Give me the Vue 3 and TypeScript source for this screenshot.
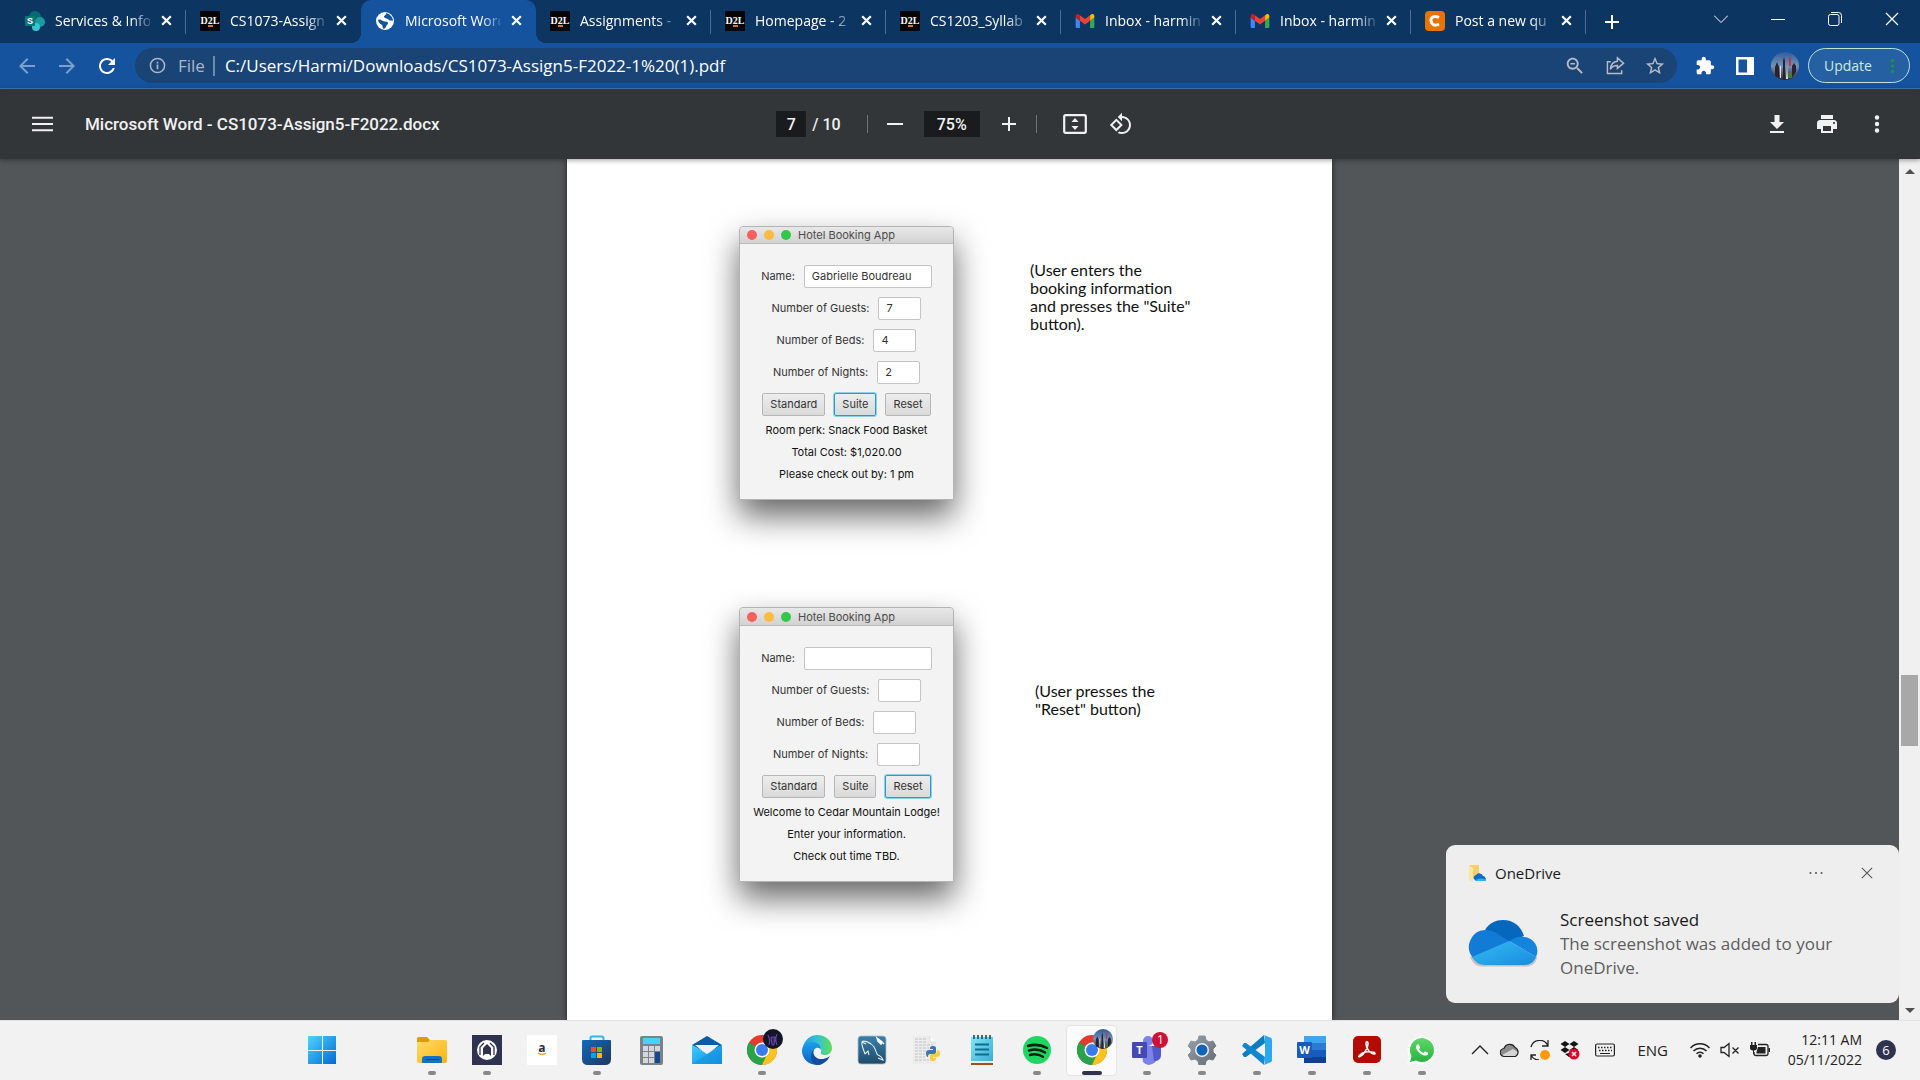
<script setup lang="ts">
import { ref } from 'vue'

interface Tab { title: string; icon: string; letter?: string; active?: boolean }
interface Booking {
  id: string
  note: string
  name: string
  guests: string
  beds: string
  nights: string
  focused: string
  lines: string[]
}
interface TaskApp { name: string; icon: string; letter?: string; badge?: string; running?: boolean; active?: boolean }

const tabs: Tab[] = [
  { title: 'Services & Info', icon: 'sharepoint', letter: 'S' },
  { title: 'CS1073-Assign', icon: 'd2l', letter: 'D2L' },
  { title: 'Microsoft Word', icon: 'globe', active: true },
  { title: 'Assignments -', icon: 'd2l', letter: 'D2L' },
  { title: 'Homepage - 2', icon: 'd2l', letter: 'D2L' },
  { title: 'CS1203_Syllab', icon: 'd2l', letter: 'D2L' },
  { title: 'Inbox - harmin', icon: 'gmail' },
  { title: 'Inbox - harmin', icon: 'gmail' },
  { title: 'Post a new qu', icon: 'chegg' },
]

const url = ref('C:/Users/Harmi/Downloads/CS1073-Assign5-F2022-1%20(1).pdf')
const page = ref('7')
const zoom = ref('75%')

const bookings = ref<Booking[]>([
  {
    id: 'suite',
    note: '(User enters the booking information and presses the "Suite" button).',
    name: 'Gabrielle Boudreau',
    guests: '7',
    beds: '4',
    nights: '2',
    focused: 'Suite',
    lines: ['Room perk: Snack Food Basket', 'Total Cost: $1,020.00', 'Please check out by: 1 pm'],
  },
  {
    id: 'reset',
    note: '(User presses the "Reset" button)',
    name: '',
    guests: '',
    beds: '',
    nights: '',
    focused: 'Reset',
    lines: ['Welcome to Cedar Mountain Lodge!', 'Enter your information.', 'Check out time TBD.'],
  },
])
const actions = ['Standard', 'Suite', 'Reset']

const apps: TaskApp[] = [
  { name: 'File Explorer', icon: 'explorer', running: true },
  { name: 'Alienware', icon: 'omen', running: true },
  { name: 'Amazon', icon: 'amazon', letter: 'a' },
  { name: 'Microsoft Store', icon: 'store', running: true },
  { name: 'Calculator', icon: 'calculator' },
  { name: 'Mail', icon: 'mail' },
  { name: 'Chrome', icon: 'chrome-a', running: true },
  { name: 'Edge', icon: 'edge' },
  { name: 'MySQL Workbench', icon: 'mysql' },
  { name: 'Python', icon: 'python' },
  { name: 'Notepad', icon: 'notepad' },
  { name: 'Spotify', icon: 'spotify', running: true },
  { name: 'Chrome', icon: 'chrome-b', running: true, active: true },
  { name: 'Teams', icon: 'teams', letter: 'T', badge: '1', running: true },
  { name: 'Settings', icon: 'settings', running: true },
  { name: 'VS Code', icon: 'vscode', running: true },
  { name: 'Word', icon: 'word', letter: 'W', running: true },
  { name: 'Acrobat', icon: 'acrobat', running: true },
  { name: 'WhatsApp', icon: 'whatsapp', running: true },
]
</script>

<template>
  <svg class="sprite" aria-hidden="true">
    <defs>
      <linearGradient id="g-win" x1="0" y1="0" x2="1" y2="1"><stop offset="0" stop-color="#4fd4ff" /><stop offset="1" stop-color="#0069d2" /></linearGradient>
      <linearGradient id="g-folder" x1="0" y1="0" x2="1" y2="1"><stop offset="0" stop-color="#ffdb6b" /><stop offset="1" stop-color="#fdb30f" /></linearGradient>
      <linearGradient id="g-store" x1="0" y1="0" x2="1" y2="1"><stop offset="0" stop-color="#0d6cbd" /><stop offset="1" stop-color="#20345e" /></linearGradient>
      <linearGradient id="g-mail" x1="0" y1="0" x2="1" y2="1"><stop offset="0" stop-color="#3bd0fb" /><stop offset="1" stop-color="#1187dd" /></linearGradient>
      <linearGradient id="g-edge" x1="0" y1="0" x2="1" y2="0"><stop offset="0" stop-color="#1f9fe4" /><stop offset="0.5" stop-color="#35c1d6" /><stop offset="1" stop-color="#62e04f" /></linearGradient>
      <linearGradient id="g-edge2" x1="0" y1="0" x2="0" y2="1"><stop offset="0" stop-color="#1aa0ec" /><stop offset="1" stop-color="#0a64c4" /></linearGradient>
      <linearGradient id="g-mysql" x1="0" y1="0" x2="0" y2="1"><stop offset="0" stop-color="#3b80a8" /><stop offset="1" stop-color="#1f4c6b" /></linearGradient>
      <linearGradient id="g-note" x1="0" y1="0" x2="1" y2="1"><stop offset="0" stop-color="#82e6fa" /><stop offset="1" stop-color="#3caccd" /></linearGradient>
      <linearGradient id="g-wa" x1="0" y1="0" x2="0" y2="1"><stop offset="0" stop-color="#5fd669" /><stop offset="1" stop-color="#27b43e" /></linearGradient>
      <linearGradient id="g-gear" x1="0" y1="0" x2="1" y2="1"><stop offset="0" stop-color="#98a0a8" /><stop offset="1" stop-color="#636b75" /></linearGradient>
      <linearGradient id="g-cloud" x1="0" y1="0" x2="1" y2="1"><stop offset="0" stop-color="#32bdf2" /><stop offset="1" stop-color="#1a8ae0" /></linearGradient>
      <linearGradient id="g-night" x1="0" y1="0" x2="0" y2="1"><stop offset="0" stop-color="#2c5c9b" /><stop offset="0.5" stop-color="#7793b4" /><stop offset="1" stop-color="#33262a" /></linearGradient>
    </defs>

    <symbol id="sharepoint" viewBox="0 0 20 20">
      <circle cx="10" cy="6" r="6" fill="#036c70" /><circle cx="15" cy="11" r="5" fill="#1a9ba1" /><circle cx="11" cy="16" r="4" fill="#37c6d0" />
      <rect y="5" width="10" height="10" rx="1" fill="#03787c" />
    </symbol>
    <symbol id="d2l" viewBox="0 0 20 20">
      <rect width="20" height="20" fill="#050505" />
      <rect x="8" y="14" width="5" height="2" fill="#e0702a" />
    </symbol>
    <symbol id="globe" viewBox="0 0 20 20">
      <circle cx="10" cy="10" r="9" fill="#fff" />
      <path d="M3 9c2-1 3 0 5 1 2 1 5 0 5 2s-2 2-2 4l-2 2c-2-1-1-3-2-4s-3-1-4-5zM11 2c1 2-2 2-2 4 1 2 4 1 5 3 1 1 3 0 4 1 0-4-3-7-7-8z" fill="#15539e" />
    </symbol>
    <symbol id="gmail" viewBox="52 42 88 66">
      <path fill="#4285f4" d="M58 108h14V74L52 59v43c0 3.32 2.69 6 6 6" /><path fill="#34a853" d="M120 108h14c3.32 0 6-2.69 6-6V59l-20 15" /><path fill="#fbbc04" d="M120 48v26l20-15v-8c0-7.42-8.47-11.65-14.4-7.2" /><path fill="#ea4335" d="M72 74V48l24 18 24-18v26L96 92" /><path fill="#c5221f" d="M52 51v8l20 15V48l-5.6-4.2c-5.94-4.45-14.4-.22-14.4 7.2" />
    </symbol>
    <symbol id="chegg" viewBox="0 0 20 20">
      <rect width="20" height="20" rx="4" fill="#eb7100" />
      <path d="M14 6.500c-5-2.500-8.500 0-8 3.500s3.500 5.500 8 3" fill="none" stroke="#fff" stroke-width="3" />
    </symbol>

    <symbol id="close" viewBox="0 0 12 12"><path d="M2 2l8 8M10 2l-8 8" stroke="currentColor" stroke-width="2" /></symbol>
    <symbol id="thin-close" viewBox="0 0 14 14"><path d="M1 1l12 12M13 1L1 13" stroke="currentColor" stroke-width="1.200" /></symbol>
    <symbol id="plus" viewBox="0 0 16 16"><path d="M8 1v14M1 8h14" stroke="currentColor" stroke-width="2" /></symbol>
    <symbol id="minus" viewBox="0 0 16 16"><path d="M0 8h16" stroke="currentColor" stroke-width="2" /></symbol>
    <symbol id="win-min" viewBox="0 0 14 14"><path d="M0 7.500h14" stroke="currentColor" /></symbol>
    <symbol id="chevron" viewBox="0 0 14 14"><path d="M0 3.500l7 7 7-7" fill="none" stroke="currentColor" /></symbol>
    <symbol id="restore" viewBox="0 0 14 14"><rect x="0.500" y="2.500" width="10.500" height="11" rx="2" fill="none" stroke="currentColor" /><path d="M3 .5h7.500a3 3 0 0 1 3 3V11" fill="none" stroke="currentColor" /></symbol>
    <symbol id="back" viewBox="0 0 24 24"><path fill="currentColor" d="M20 11H7.830l5.590-5.590L12 4l-8 8 8 8 1.410-1.410L7.830 13H20v-2z" /></symbol>
    <symbol id="forward" viewBox="0 0 24 24"><path fill="currentColor" d="M4 11h12.170l-5.590-5.590L12 4l8 8-8 8-1.410-1.410L16.170 13H4v-2z" /></symbol>
    <symbol id="reload" viewBox="0 0 24 24"><path fill="currentColor" d="M17.650 6.350C16.200 4.900 14.210 4 12 4c-4.420 0-7.990 3.580-7.990 8s3.570 8 7.990 8c3.730 0 6.840-2.550 7.730-6h-2.080c-.82 2.330-3.040 4-5.650 4-3.310 0-6-2.690-6-6s2.690-6 6-6c1.660 0 3.140.69 4.220 1.780L13 11h7V4l-2.350 2.350z" /></symbol>
    <symbol id="info" viewBox="0 0 18 18"><circle cx="9" cy="9" r="7.500" fill="none" stroke="currentColor" stroke-width="1.600" /><path d="M9 8v5M9 5v1.800" stroke="currentColor" stroke-width="1.800" /></symbol>
    <symbol id="zoom-out" viewBox="0 0 24 24"><path fill="currentColor" d="M15.500 14h-.79l-.28-.27C15.410 12.590 16 11.110 16 9.500 16 5.910 13.090 3 9.500 3S3 5.910 3 9.500 5.910 16 9.500 16c1.610 0 3.090-.59 4.230-1.570l.27.28v.79l5 4.990L20.490 19l-4.990-5zm-6 0C7.010 14 5 11.990 5 9.500S7.010 5 9.500 5 14 7.010 14 9.500 11.990 14 9.500 14zM7 8.700h5v1.600H7z" /></symbol>
    <symbol id="share" viewBox="0 0 20 20"><path d="M5 6H1.500v12.500h15V15M12 2l6.500 5.500L12 13v-3c-4 0-6 1.500-7.500 4 .5-4.500 3-8 7.500-8.500z" fill="none" stroke="currentColor" stroke-width="1.500" /></symbol>
    <symbol id="star" viewBox="0 0 24 24"><path fill="currentColor" d="M22 9.240l-7.190-.62L12 2 9.190 8.630 2 9.240l5.460 4.730L5.820 21 12 17.270 18.180 21l-1.630-7.030L22 9.240zM12 15.400l-3.760 2.270 1-4.280-3.320-2.880 4.380-.38L12 6.100l1.710 4.040 4.380.38-3.320 2.880 1 4.280L12 15.400z" /></symbol>
    <symbol id="puzzle" viewBox="0 0 24 24"><path fill="currentColor" d="M20.500 11H19V7c0-1.100-.9-2-2-2h-4V3.500C13 2.120 11.880 1 10.500 1S8 2.120 8 3.500V5H4c-1.100 0-1.990.9-1.990 2v3.800H3.500c1.490 0 2.700 1.210 2.700 2.700s-1.210 2.700-2.700 2.700H2V20c0 1.100.9 2 2 2h3.800v-1.500c0-1.490 1.210-2.700 2.700-2.700s2.700 1.210 2.700 2.700V22H17c1.100 0 2-.9 2-2v-4h1.500c1.380 0 2.500-1.120 2.500-2.500S21.880 11 20.500 11z" /></symbol>
    <symbol id="panel" viewBox="0 0 18 18"><path fill="currentColor" fill-rule="evenodd" d="M0 0h18v18H0zM2.500 2.500v13H11v-13z" /></symbol>
    <symbol id="skyline" viewBox="0 0 28 28">
      <circle cx="14" cy="14" r="14" fill="url(#g-night)" />
      <path d="M4 24V15l2-5 2 5v11zM12 27.500V9l1-4 1 4v18.500zM21 25V14l2-3 2 3v6z" fill="#2a2230" />
      <path d="M9 26V14h1v12zM15 27l1-14 1 14z" fill="#dbe3ef" /><path d="M18 5h2v9h-2z" fill="#b63a56" /><path d="M17 21h4v5h-4z" fill="#3f7c3c" />
    </symbol>

    <symbol id="menu" viewBox="0 0 22 16"><path d="M0 1.500h22M0 8h22M0 14.500h22" stroke="currentColor" stroke-width="2.200" /></symbol>
    <symbol id="fit" viewBox="0 0 24 20"><rect x="1.200" y="1.200" width="21.600" height="17.600" rx="1.500" fill="none" stroke="currentColor" stroke-width="2.200" /><path fill="currentColor" d="M12 4l3.500 4h-7zM12 16l3.500-4h-7z" /></symbol>
    <symbol id="rotate" viewBox="0 0 24 24"><path fill="currentColor" d="M7.340 6.410L.86 12.900l6.490 6.480 6.490-6.480-6.500-6.490zM3.690 12.900l3.660-3.660L11 12.900l-3.660 3.660-3.650-3.660zm15.670-6.260C17.610 4.880 15.300 4 13 4V.76L8.760 5 13 9.240V6c1.790 0 3.580.68 4.950 2.050 2.730 2.730 2.730 7.170 0 9.900C16.580 19.320 14.790 20 13 20c-.97 0-1.940-.21-2.840-.61l-1.490 1.490C10.020 21.620 11.510 22 13 22c2.300 0 4.610-.88 6.360-2.640 3.520-3.510 3.520-9.210 0-12.720z" /></symbol>
    <symbol id="download" viewBox="0 0 24 24"><path fill="currentColor" d="M5 19h14v2H5zM19 10h-4.500V3h-5v7H5l7 7z" /></symbol>
    <symbol id="print" viewBox="0 0 24 24"><path fill="currentColor" d="M19 8H5c-1.660 0-3 1.340-3 3v6h4v4h12v-4h4v-6c0-1.660-1.340-3-3-3zm-3 11H8v-5h8v5zm3-7c-.55 0-1-.45-1-1s.45-1 1-1 1 .45 1 1-.45 1-1 1zm-1-9H6v4h12V3z" /></symbol>
    <symbol id="dots" viewBox="0 0 6 20"><g fill="currentColor"><circle cx="3" cy="3.500" r="2.200" /><circle cx="3" cy="10" r="2.200" /><circle cx="3" cy="16.500" r="2.200" /></g></symbol>
    <symbol id="more" viewBox="0 0 14 4"><g fill="currentColor"><circle cx="1.500" cy="2" r="1" /><circle cx="7" cy="2" r="1" /><circle cx="12.500" cy="2" r="1" /></g></symbol>

    <symbol id="od-folder" viewBox="0 0 18 18">
      <path d="M1 1h10v14H1z" fill="#f5cf6b" /><path d="M1 1l4 3v14l-4-2z" fill="#fde59b" />
      <path d="M6 15a3 3 0 0 1 2-4 4 4 0 0 1 7 1 3 3 0 0 1 2 5H8z" fill="#0f6cc8" /><path d="M7 17c3-3 7-3 11-1v1z" fill="#2fb4f0" />
    </symbol>
    <symbol id="od-cloud" viewBox="0 0 70 48">
      <path d="M14 46.500h44c6 0 11-4 11-10H2c2 6 6 10 12 10z" fill="#000" opacity="0.180" />
      <path d="M17 10C21 3 28 0 35 0c10 0 18 6 21 16L41 22z" fill="#0668bd" />
      <path d="M17 10c7 0 12 3 16 6l9 6L5 38A17 17 0 0 1 17 10z" fill="#127bd6" />
      <path d="M41 21c6-4 10-5 15-4a14 14 0 0 1 12 20z" fill="#1584dc" />
      <path d="M4 37l37-16 27 16c-2 5-6 8-12 8H17C11 45 7 42 4 37z" fill="url(#g-cloud)" />
    </symbol>

    <symbol id="start" viewBox="0 0 30 30"><path d="M1 1h14v14H1zM16 1h13v14H16zM1 16h14v13H1zM16 16h13v13H16z" fill="url(#g-win)" /></symbol>
    <symbol id="explorer" viewBox="0 0 30 30">
      <path d="M0 4q0-2 2-2h8l3 3v5H0z" fill="#dd9c08" /><path d="M0 7h11l2-2h15q2 0 2 2v19q0 2-2 2H2q-2 0-2-2z" fill="url(#g-folder)" />
      <path d="M5 28v-4q0-3 3-3h14q3 0 3 3v4z" fill="#1173c5" /><path d="M9 24.500h13" stroke="#0a4d91" />
    </symbol>
    <symbol id="omen" viewBox="0 0 30 30">
      <rect width="30" height="30" fill="#2f3350" /><circle cx="15" cy="15" r="9" fill="#fff" stroke="#fff" stroke-width="2" />
      <path d="M11 21v-8l4-4 4 4v8l-2-2h-4z" fill="#2f3350" /><path d="M8 20v-8l4-4M22 20v-8l-4-4" fill="none" stroke="#2f3350" stroke-width="1.300" />
    </symbol>
    <symbol id="amazon" viewBox="0 0 30 30">
      <rect width="30" height="30" fill="#fff" />
      <path d="M11 18q4 3 8 0" fill="none" stroke="#f5a021" stroke-width="1.300" />
    </symbol>
    <symbol id="store" viewBox="0 0 30 30">
      <path d="M8.500 7V3q0-1.500 1.500-1.500h10q1.500 0 1.500 1.500v4" fill="none" stroke="#30b9ee" stroke-width="2" />
      <path d="M0 6q0-1 1-1h27q1 0 1 1v18q0 6-6 6H6q-6 0-6-6z" fill="url(#g-store)" />
      <path d="M9 12h5v5H9z" fill="#f25022" /><path d="M15 12h5v5h-5z" fill="#7fba00" /><path d="M9 18h5v5H9z" fill="#00a4ef" /><path d="M15 18h5v5h-5z" fill="#ffb900" />
    </symbol>
    <symbol id="calculator" viewBox="0 0 30 30">
      <rect x="3" y="1" width="23" height="29" rx="2" fill="#7b8289" /><rect x="6" y="3" width="17" height="6" fill="#45d3f7" />
      <path d="M6 11h5v5H6zM12 11h5v5h-5zM18 11h5v5h-5zM6 17h5v5H6zM12 17h5v5h-5zM6 23h5v5H6zM12 23h5v5h-5z" fill="#d4d8dc" /><path d="M18 17h5v11h-5z" fill="#124a8e" />
    </symbol>
    <symbol id="mail" viewBox="0 0 30 30">
      <path d="M0 10L15 1l15 9-15 9z" fill="#0a5ba8" /><path d="M3 10h24L15 20z" fill="#f2f2f2" /><path d="M0 10l15 9 15-9v19H0z" fill="url(#g-mail)" /><path d="M0 29l30-19v19z" fill="#1494e2" opacity="0.600" />
    </symbol>
    <symbol id="chrome-base" viewBox="0 0 30 30">
      <circle cx="15" cy="15" r="15" fill="#e33b2e" />
      <path d="M15 15L2 7.500A15 15 0 0 0 15 30l6.500-11.200z" fill="#2aa24a" /><path d="M15 15h7l-7 15A15 15 0 0 0 28 7.500H15z" fill="#fcc31e" />
      <circle cx="15" cy="15" r="7.500" fill="#fff" /><circle cx="15" cy="15" r="6" fill="#3b7bee" />
    </symbol>
    <symbol id="chrome-a" viewBox="0 0 42 42">
      <use href="#chrome-base" x="6" y="6" width="30" height="30" />
      <circle cx="32" cy="10" r="10" fill="#131629" /><path d="M27 6l2 5-1 5M36 5l-2 5 2 6M30 8h4l-1 8h-2z" stroke="#6a48ae" fill="#322858" />
    </symbol>
    <symbol id="chrome-b" viewBox="0 0 42 42">
      <use href="#chrome-base" x="6" y="6" width="30" height="30" /><use href="#skyline" x="22" y="0" width="20" height="20" />
    </symbol>
    <symbol id="edge" viewBox="0 0 30 30">
      <path d="M1 12C3 4 9 0 15 0c9 0 15 6 15 13 0 5-4 7-7 7s-5-1-4-3c1-3-1-7-6-7-4 0-9 2-12 2z" fill="url(#g-edge)" />
      <path d="M0 16C0 9 6 6 11 7c5 0 8 4 8 8-3-5-9-1-8 5 1 5 5 9 9 9.500C9 32 0 25 0 16z" fill="url(#g-edge2)" />
      <path d="M12 14c-3 8 6 14 16 7-3 6-8 9-13 9C8 29 7 19 12 14z" fill="#124f9e" />
    </symbol>
    <symbol id="mysql" viewBox="0 0 30 30">
      <rect x="1" y="1" width="28" height="28" rx="3" fill="url(#g-mysql)" stroke="#a9bfcc" stroke-width="0.800" />
      <path d="M8 19C6 13 4 9 5 7s9 0 12 5 2 7 4 8 4 1 5 5l-5-2M8 19l3-3 1 4M5 7l4 2" fill="none" stroke="#e5eef3" stroke-width="1.100" /><path d="M20 3l5 4-1 2-3-3zM24 6l3 3" stroke="#fff" stroke-width="1.500" fill="#fff" />
    </symbol>
    <symbol id="python" viewBox="0 0 30 30">
      <path d="M1 1h17l6 6v22H1z" fill="#ececec" /><path d="M18 1v6h6" fill="#fff" stroke="#ccc" stroke-width="0.600" /><path d="M3 4h12M3 7h12M3 10h18M3 13h14M3 16h11M3 19h10M3 22h10M3 25h14" stroke="#c2c2c2" stroke-dasharray="3 1" />
      <path d="M18 13q0-2 3-2t3 2v4q0 2-2 2h-4q-2 0-2 3-2 0-2-4 0-3 3-3h4v-1h-3z" fill="#3d76a8" /><path d="M25 15q3 0 3 4 0 3-3 3h-4v1h3v1q0 2-3 2t-3-2v-3q0-2 2-2h3q2 0 2-4z" fill="#fcca3c" />
    </symbol>
    <symbol id="notepad" viewBox="0 0 30 30">
      <path d="M4 26h22v4H4z" fill="#a05117" /><path d="M4 26h22v2H4z" fill="#e9eef0" /><path d="M4 2h22v24H4z" fill="url(#g-note)" />
      <path d="M7 0v4M11 0v4M15 0v4M19 0v4M23 0v4" stroke="#116587" stroke-width="1.800" /><path d="M8 9.500h14M8 14.500h14M8 19.500h14" stroke="#0e6d91" stroke-width="1.800" />
    </symbol>
    <symbol id="spotify" viewBox="0 0 30 30">
      <circle cx="15" cy="15" r="14" fill="#1ed760" /><path d="M6 11q10-3 19 2M7 15.500q9-2.500 16 2M8 20q7-2 13 1.800" fill="none" stroke="#0c1a10" stroke-width="2.500" stroke-linecap="round" />
    </symbol>
    <symbol id="teams" viewBox="0 0 42 42">
      <circle cx="22" cy="12" r="5" fill="#7b83eb" /><path d="M15 17h16v10a8 8 0 0 1-14 6z" fill="#7b83eb" /><path d="M26 17h9v9q0 6-7 6z" fill="#5059c9" />
      <rect x="6" y="13" width="15" height="16" rx="1" fill="#444ab5" />
    </symbol>
    <symbol id="settings" viewBox="0 0 30 30">
      <path d="M12 1h6l1 4 3 2 4-1 3 5-3 3v3l3 3-3 5-4-1-3 2-1 4h-6l-1-4-3-2-4 1-3-5 3-3v-3L1 11l3-5 4 1 3-2z" fill="url(#g-gear)" stroke="url(#g-gear)" stroke-linejoin="round" />
      <circle cx="15" cy="15" r="7" fill="#eceff2" /><circle cx="15" cy="15" r="5.500" fill="#1265b6" />
    </symbol>
    <symbol id="vscode" viewBox="0 0 30 30">
      <path d="M22 0L0 19l2 3h2L23 8z" fill="#0f7dc2" /><path d="M22 30L0 11l2-3h2l19 14z" fill="#1287d0" /><path d="M22 0l7 3q1 .5 1 2v20q0 1.500-1 2l-7 3q1-1 1-3V3q0-2-1-3z" fill="#2aa8f2" />
    </symbol>
    <symbol id="word" viewBox="0 0 30 30">
      <path d="M7 1h22v7H7z" fill="#41a5ee" /><path d="M7 8h22v7H7z" fill="#2b7cd3" /><path d="M7 15h22v7H7z" fill="#185abd" /><path d="M7 22h22v6H7z" fill="#103f91" />
      <rect y="7" width="15" height="16" rx="1" fill="#185abd" />
    </symbol>
    <symbol id="acrobat" viewBox="0 0 30 30">
      <rect x="1" y="1" width="28" height="27" rx="5" fill="#b30b00" />
      <path d="M7 21c2-3 7-5 13-4 3 0 4 2 2 2-3 0-8-5-8-10 0-3 2-3 2 0 0 4-4 10-7 12-1 1-3 1-2 0z" fill="none" stroke="#fff" stroke-width="1.500" />
    </symbol>
    <symbol id="whatsapp" viewBox="0 0 30 30">
      <path d="M0 30l2-8A14 14 0 1 1 8 28z" fill="#fff" /><path d="M3 27l1.500-6A12 12 0 1 1 9 25.500z" fill="url(#g-wa)" />
      <path transform="translate(3 3)" fill="#fff" d="M17.472 14.382c-.297-.149-1.758-.867-2.030-.967-.273-.099-.471-.148-.67.15-.197.297-.767.966-.94 1.164-.173.199-.347.223-.644.075-.297-.15-1.255-.463-2.390-1.475-.883-.788-1.480-1.761-1.653-2.059-.173-.297-.018-.458.13-.606.134-.133.298-.347.446-.52.149-.174.198-.298.298-.497.099-.198.05-.371-.025-.52-.075-.149-.669-1.612-.916-2.207-.242-.579-.487-.5-.669-.51-.173-.008-.371-.01-.57-.01-.198 0-.52.074-.792.372-.272.297-1.040 1.016-1.040 2.479 0 1.462 1.065 2.875 1.213 3.074.149.198 2.096 3.200 5.077 4.487.709.306 1.262.489 1.694.625.712.227 1.360.195 1.871.118.571-.085 1.758-.719 2.006-1.413.248-.694.248-1.289.173-1.413-.074-.124-.272-.198-.57-.347z" />
    </symbol>

    <symbol id="up" viewBox="0 0 20 20"><path d="M2 14l8-8 8 8" fill="none" stroke="#222" stroke-width="1.400" /></symbol>
    <symbol id="cloud" viewBox="0 0 20 20"><path d="M4.500 16.500a4 4 0 0 1-.5-8 6 6 0 0 1 11-1 5 5 0 0 1 .5 9z" fill="#8d8d8d" /><path d="M2 15L13 9l6 4-3 3.500H4z" fill="#d5d5d5" /><path d="M4.500 16.500a4 4 0 0 1-.5-8 6 6 0 0 1 11-1 5 5 0 0 1 .5 9z" fill="none" stroke="#222" stroke-width="1.200" /></symbol>
    <symbol id="sync" viewBox="0 0 20 20"><path d="M1 7a9 9 0 0 1 17-1M18 0v6h-6M6 15H1v5M1 15a9 9 0 0 0 8 5" fill="none" stroke="#222" stroke-width="1.300" /><circle cx="15" cy="15" r="5" fill="#ff9b0a" /></symbol>
    <symbol id="dropbox" viewBox="0 0 20 20"><path d="M5 1l4.500 3L5 7 .5 4zM14 1l4.500 3L14 7 9.500 4zM5 7l4.500 3L5 13 .5 10zM14 7l4.500 3L14 13 9.500 10zM9 13l4 3-4 1-4-3z" fill="#151515" /><circle cx="14" cy="14" r="5.500" fill="#d9052c" /><path d="M12 12l4 4M16 12l-4 4" stroke="#fff" stroke-width="1.500" /></symbol>
    <symbol id="keyboard" viewBox="0 0 20 20"><rect x="0.600" y="4" width="18.800" height="12" rx="1.500" fill="none" stroke="#222" stroke-width="1.200" /><path d="M3 7.500h14M4 10.500h13" stroke="#222" stroke-width="1.500" stroke-dasharray="1.500 1.500" /><path d="M5 13.500h10" stroke="#222" /></symbol>
    <symbol id="wifi" viewBox="0 0 20 20"><path d="M.5 8a13 13 0 0 1 19 0M3.500 11a9 9 0 0 1 13 0M6.500 13.800a5 5 0 0 1 7 0" fill="none" stroke="#222" stroke-width="1.500" /><circle cx="10" cy="16" r="1.800" fill="#222" /></symbol>
    <symbol id="mute" viewBox="0 0 20 20"><path d="M1 7.500h3L9 3.500v13l-5-4H1zM12.500 7.500l6 6M18.500 7.500l-6 6" fill="none" stroke="#222" stroke-width="1.300" /></symbol>
    <symbol id="battery" viewBox="0 0 20 20"><path d="M8 4.500h8q2 0 2 2v7q0 2-2 2H6q-2 0-2-2V12" fill="none" stroke="#222" stroke-width="1.300" /><path d="M8 7h7.500v6.500h-9V12zM18.500 8h1.500v4h-1.500zM1 2h1.500v3h2V2H6v3h1v3q0 2-3 2.500V14H3v-3.500Q0 10 0 8V5h1z" fill="#222" /></symbol>
  </svg>

  <div class="desktop">
    <header class="browser">
      <nav class="tabstrip" aria-label="Tabs">
        <div v-for="(tab, i) in tabs" :key="i" class="tab" :class="{ active: tab.active, nosep: i === 1 }">
          <span class="favicon" :class="tab.icon">
            <svg><use :href="'#' + tab.icon" /></svg>
            <b v-if="tab.letter">{{ tab.letter }}</b>
          </span>
          <button class="tab-title">{{ tab.title }}</button>
          <button class="tab-close" aria-label="Close tab"><svg><use href="#close" /></svg></button>
        </div>
        <button class="new-tab" aria-label="New tab"><svg><use href="#plus" /></svg></button>
        <div class="window-controls">
          <button aria-label="Search tabs"><svg><use href="#chevron" /></svg></button>
          <button aria-label="Minimize"><svg><use href="#win-min" /></svg></button>
          <button aria-label="Restore"><svg><use href="#restore" /></svg></button>
          <button aria-label="Close"><svg><use href="#thin-close" /></svg></button>
        </div>
      </nav>
      <div class="addressbar">
        <button class="nav dim" aria-label="Back"><svg><use href="#back" /></svg></button>
        <button class="nav dim" aria-label="Forward"><svg><use href="#forward" /></svg></button>
        <button class="nav" aria-label="Reload"><svg><use href="#reload" /></svg></button>
        <div class="omnibox">
          <svg class="info"><use href="#info" /></svg>
          <span class="scheme">File</span>
          <input v-model="url" class="url" aria-label="Address" spellcheck="false" />
          <button class="omni-action" aria-label="Zoom"><svg><use href="#zoom-out" /></svg></button>
          <button class="omni-action share" aria-label="Share"><svg><use href="#share" /></svg></button>
          <button class="omni-action" aria-label="Bookmark"><svg><use href="#star" /></svg></button>
        </div>
        <button class="nav ext" aria-label="Extensions"><svg><use href="#puzzle" /></svg></button>
        <button class="nav panel" aria-label="Side panel"><svg><use href="#panel" /></svg></button>
        <button class="nav profile" aria-label="Profile"><svg><use href="#skyline" /></svg></button>
        <button class="update"><span>Update</span><svg><use href="#dots" /></svg></button>
      </div>
    </header>

    <section class="pdfbar">
      <div class="pdf-left">
        <button class="pdf-btn menu" aria-label="Menu"><svg><use href="#menu" /></svg></button>
        <h1>Microsoft Word - CS1073-Assign5-F2022.docx</h1>
      </div>
      <div class="pdf-center">
        <input v-model="page" class="page-no" aria-label="Page number" />
        <span class="page-total">/ 10</span>
        <span class="rule"></span>
        <button class="pdf-btn small" aria-label="Zoom out"><svg><use href="#minus" /></svg></button>
        <input v-model="zoom" class="zoom-level" aria-label="Zoom level" />
        <button class="pdf-btn small" aria-label="Zoom in"><svg><use href="#plus" /></svg></button>
        <span class="rule"></span>
        <button class="pdf-btn fit" aria-label="Fit to page"><svg><use href="#fit" /></svg></button>
        <button class="pdf-btn rotate" aria-label="Rotate"><svg><use href="#rotate" /></svg></button>
      </div>
      <div class="pdf-right">
        <button class="pdf-btn" aria-label="Download"><svg><use href="#download" /></svg></button>
        <button class="pdf-btn" aria-label="Print"><svg><use href="#print" /></svg></button>
        <button class="pdf-btn kebab" aria-label="More"><svg><use href="#dots" /></svg></button>
      </div>
    </section>

    <main class="viewer">
      <div class="canvas">
        <article class="page">
          <section v-for="b in bookings" :key="b.id" class="step" :class="b.id">
            <form class="mac" @submit.prevent>
              <div class="titlebar"><i class="red"></i><i class="yellow"></i><i class="green"></i><span>Hotel Booking App</span></div>
              <div class="fields">
                <div class="field"><label :for="b.id + '-name'">Name:</label><input :id="b.id + '-name'" v-model="b.name" class="wide" /></div>
                <div class="field"><label :for="b.id + '-guests'">Number of Guests:</label><input :id="b.id + '-guests'" v-model="b.guests" /></div>
                <div class="field"><label :for="b.id + '-beds'">Number of Beds:</label><input :id="b.id + '-beds'" v-model="b.beds" /></div>
                <div class="field"><label :for="b.id + '-nights'">Number of Nights:</label><input :id="b.id + '-nights'" v-model="b.nights" /></div>
                <div class="field">
                  <button v-for="a in actions" :key="a" type="button" :class="{ focused: a === b.focused }">{{ a }}</button>
                </div>
              </div>
              <p v-for="line in b.lines" :key="line">{{ line }}</p>
            </form>
            <p class="note">{{ b.note }}</p>
          </section>
        </article>
      </div>
      <div class="scrollbar"><i class="arrow up"></i><i class="thumb"></i><i class="arrow down"></i></div>

      <aside class="toast">
        <header>
          <svg class="toast-app"><use href="#od-folder" /></svg>
          <span>OneDrive</span>
          <button aria-label="More options"><svg class="more"><use href="#more" /></svg></button>
          <button aria-label="Dismiss"><svg><use href="#thin-close" /></svg></button>
        </header>
        <div class="toast-body">
          <svg><use href="#od-cloud" /></svg>
          <div><strong>Screenshot saved</strong><p>The screenshot was added to your OneDrive.</p></div>
        </div>
      </aside>
    </main>

    <footer class="taskbar">
      <button class="task start" aria-label="Start"><svg><use href="#start" /></svg></button>
      <button v-for="(app, i) in apps" :key="i" class="task" :class="[app.icon, { running: app.running, active: app.active }]" :aria-label="app.name">
        <svg><use :href="'#' + app.icon" /></svg>
        <b v-if="app.letter" class="letter">{{ app.letter }}</b>
        <span v-if="app.badge" class="badge">{{ app.badge }}</span>
      </button>
      <div class="tray">
        <svg><use href="#up" /></svg>
        <svg><use href="#cloud" /></svg>
        <svg><use href="#sync" /></svg>
        <svg><use href="#dropbox" /></svg>
        <svg class="kbd"><use href="#keyboard" /></svg>
        <span class="lang">ENG</span>
        <svg><use href="#wifi" /></svg>
        <svg><use href="#mute" /></svg>
        <svg><use href="#battery" /></svg>
        <time>12:11 AM<br />05/11/2022</time>
        <span class="count">6</span>
      </div>
    </footer>
  </div>
</template>

<style>
body {
  margin: 0;
  background: #525659;
}
</style>

<style scoped>
* {
  box-sizing: border-box;
}
button,
input {
  margin: 0;
  padding: 0;
  border: 0;
  background: none;
  color: inherit;
  font: inherit;
  outline: none;
}
svg {
  display: block;
  flex: none;
  overflow: visible;
}
.sprite {
  position: absolute;
  width: 0;
  height: 0;
}
.desktop {
  display: flex;
  flex-direction: column;
  min-height: 100vh;
  font-family: 'Open Sans', 'Noto Sans', sans-serif;
}

/* Browser chrome */
.browser {
  background: #15539e;
  color: #fff;
  border-bottom: 1px solid #4a7ab5;
}
.tabstrip {
  display: flex;
  height: 43px;
  padding-left: 11px;
  background: #0c3562;
}
.tab {
  display: flex;
  flex: 0 1 175px;
  align-items: center;
  min-width: 0;
  padding: 0 11px 2px 14px;
  position: relative;
}
.tab::after {
  content: '';
  position: absolute;
  right: 0;
  top: 10px;
  width: 1px;
  height: 24px;
  background: #4f6d8f;
}
.tab.nosep::after {
  display: none;
}
.tab.active {
  background: #15539e;
  border-radius: 10px 10px 0 0;
}
.tab.active::before,
.tab.active::after {
  content: '';
  position: absolute;
  top: auto;
  bottom: 0;
  width: 10px;
  height: 10px;
}
.tab.active::before {
  left: -10px;
  background: radial-gradient(circle at 0 0, transparent 10px, #15539e 10px);
}
.tab.active::after {
  right: -10px;
  background: radial-gradient(circle at 100% 0, transparent 10px, #15539e 10px);
}
.favicon {
  display: grid;
  place-items: center;
  flex: none;
  width: 20px;
  height: 20px;
  margin-right: 10px;
}
.favicon svg {
  grid-area: 1 / 1;
  width: 20px;
  height: 20px;
}
.favicon.gmail svg {
  height: 14px;
}
.favicon b {
  grid-area: 1 / 1;
  z-index: 1;
  font-family: 'Liberation Serif', serif;
  font-size: 10px;
  line-height: 12px;
}
.favicon.sharepoint b {
  justify-self: start;
  padding-left: 2px;
  font-family: 'Liberation Sans', sans-serif;
  font-size: 9px;
}
.tab-title {
  flex: 1;
  min-width: 0;
  white-space: nowrap;
  text-align: left;
  font-size: 14px;
  line-height: 24px;
  -webkit-mask-image: linear-gradient(to right, #000 80%, rgba(0, 0, 0, 0.2));
  mask-image: linear-gradient(to right, #000 80%, rgba(0, 0, 0, 0.2));
}
.tab-close {
  margin-left: 8px;
  padding: 2px;
}
.tab-close svg {
  width: 13px;
  height: 13px;
}
.new-tab {
  padding: 0 18px;
}
.new-tab svg {
  width: 16px;
  height: 16px;
}
.window-controls {
  display: flex;
  margin-left: auto;
  padding-bottom: 6px;
}
.window-controls button {
  display: grid;
  place-items: center;
  width: 57px;
}
.window-controls svg {
  width: 14px;
  height: 14px;
}
.addressbar {
  display: flex;
  align-items: center;
  height: 45px;
  padding: 0 10px 0 7px;
}
.nav {
  display: grid;
  place-items: center;
  width: 40px;
  height: 40px;
}
.nav svg {
  width: 24px;
  height: 24px;
}
.nav.dim {
  color: #7ba0cd;
}
.omnibox {
  display: flex;
  flex: 1;
  align-items: center;
  height: 35px;
  margin: 0 8px;
  padding: 0 2px 0 14px;
  border-radius: 18px;
  background: #1a4475;
}
.info {
  width: 17px;
  height: 17px;
  color: #a9b7c8;
}
.scheme {
  margin: 0 10px 0 12px;
  padding-right: 8px;
  border-right: 2px solid #6f8cae;
  color: #a9b7c8;
  font-size: 17px;
  line-height: 20px;
}
.url {
  flex: 1;
  min-width: 0;
  font-size: 17px;
}
.omni-action {
  display: grid;
  place-items: center;
  width: 40px;
  color: #b8bcc4;
}
.omni-action svg {
  width: 22px;
  height: 22px;
}
.omni-action.share svg {
  width: 19px;
  height: 19px;
}
.nav.ext svg {
  width: 20px;
  height: 20px;
}
.nav.panel svg {
  width: 18px;
  height: 18px;
}
.nav.profile svg {
  width: 28px;
  height: 28px;
}
.update {
  display: flex;
  align-items: center;
  justify-content: space-between;
  width: 102px;
  height: 35px;
  margin-left: 3px;
  padding: 0 14px 0 15px;
  border: 1px solid #bfe3d4;
  border-radius: 18px;
  background: #2560a2;
  color: #cfe9dc;
  font-size: 14px;
}
.update svg {
  width: 5px;
  height: 18px;
  color: #1e8e4a;
}

/* PDF toolbar */
.pdfbar {
  display: grid;
  grid-template-columns: 1fr auto 1fr;
  align-items: center;
  height: 70px;
  background: #323639;
  color: #f1f1f1;
  font-family: Roboto, sans-serif;
  font-size: 17px;
  box-shadow: 0 1px 5px rgba(0, 0, 0, 0.4);
  position: relative;
  z-index: 1;
}
.pdf-left,
.pdf-center,
.pdf-right {
  display: flex;
  align-items: center;
}
.pdf-left {
  padding-left: 17px;
}
.pdf-left h1 {
  margin: 0 0 0 18px;
  font-size: 17px;
  font-weight: 500;
  white-space: nowrap;
}
.pdf-right {
  justify-content: flex-end;
  padding-right: 18px;
}
.pdf-btn {
  display: grid;
  place-items: center;
  width: 50px;
  height: 50px;
}
.pdf-btn svg {
  width: 24px;
  height: 24px;
}
.pdf-btn.menu svg {
  width: 21px;
  height: 16px;
}
.pdf-btn.small svg {
  width: 16px;
  height: 16px;
}
.pdf-btn.fit svg {
  height: 20px;
}
.pdf-btn.fit,
.pdf-btn.rotate {
  width: 46px;
}
.pdf-btn.fit {
  margin-left: 15px;
}
.pdf-btn.kebab svg {
  width: 6px;
  height: 20px;
}
.pdf-center input {
  height: 26px;
  background: #191b1c;
  text-align: center;
  font-size: 16px;
  font-weight: 500;
}
.page-no {
  width: 30px;
}
.zoom-level {
  width: 56px;
  margin: 0 2px;
}
.page-total {
  margin: 0 26px 0 6px;
  font-size: 16px;
  font-weight: 500;
}
.rule {
  width: 1px;
  height: 18px;
  background: #6f7274;
}
.pdf-btn.small {
  width: 54px;
}

/* Document */
.viewer {
  display: flex;
  flex: 1;
  position: relative;
}
.canvas {
  display: flex;
  flex: 1;
  justify-content: center;
  background: #525659;
}
.page {
  width: 765px;
  padding: 67px 0 0 172px;
  background: #fff;
  box-shadow: 0 0 6px rgba(0, 0, 0, 0.6);
}
.step {
  display: flex;
  align-items: flex-start;
  margin-bottom: 107px;
}
.mac {
  width: 215px;
  padding-bottom: 14px;
  border: 1px solid #b4b4b4;
  border-radius: 4px 4px 0 0;
  background: #f3f3f3;
  box-shadow: 0 16px 32px rgba(0, 0, 0, 0.6);
  color: #333;
  font-family: Inter, sans-serif;
  font-size: 11px;
}
.titlebar {
  display: flex;
  align-items: center;
  gap: 7px;
  height: 17px;
  padding-left: 7px;
  border-bottom: 1px solid #bcbcbc;
  border-radius: 4px 4px 0 0;
  background: linear-gradient(#e8e8e8, #d2d2d2);
  color: #4c4c4c;
}
.reset .titlebar {
  height: 18px;
}
.titlebar i {
  width: 10px;
  height: 10px;
  border-radius: 50%;
}
.titlebar span {
  line-height: 16px;
}
.red { background: #fc605c; }
.yellow { background: #fdbc40; }
.green { background: #34c84a; }
.fields {
  display: flex;
  flex-direction: column;
  gap: 8px;
  padding-top: 20px;
  margin-bottom: 3px;
}
.field {
  display: flex;
  align-items: center;
  justify-content: center;
  gap: 9px;
  height: 24px;
}
.field input {
  width: 43px;
  height: 23px;
  padding: 0 7px;
  border: 1px solid #c4c4c4;
  border-radius: 2px;
  background: #fff;
}
.field input.wide {
  width: 128px;
}
.field button {
  height: 23px;
  padding: 0 7px;
  border: 1px solid #b6b6b6;
  border-radius: 2px;
  background: linear-gradient(#ededed, #dadada);
}
.field button.focused {
  border-color: #21a0cc;
  box-shadow: 0 0 0 1px #8dd0e6;
}
.mac p {
  margin: 0;
  color: #111;
  line-height: 22px;
  text-align: center;
}
.note {
  width: 170px;
  margin: 35px 0 0 76px;
  color: #111;
  font-family: Lato, sans-serif;
  font-size: 16px;
  line-height: 18px;
}
.reset .note {
  margin: 75px 0 0 81px;
  width: 130px;
}
.scrollbar {
  display: flex;
  flex-direction: column;
  align-items: center;
  width: 21px;
  background: #f0f0f0;
}
.arrow {
  border: 5px solid transparent;
}
.arrow.up {
  margin-top: 5px;
  border-bottom-color: #505050;
}
.arrow.down {
  margin: auto 0 2px;
  border-top-color: #505050;
}
.thumb {
  width: 17px;
  height: 71px;
  margin-top: 501px;
  background: #a8a8a8;
}

/* Notification */
.toast {
  position: absolute;
  right: 21px;
  bottom: 17px;
  width: 453px;
  height: 158px;
  padding: 0 26px 0 22px;
  border-radius: 9px;
  background: #eee;
  color: #1a1a1a;
}
.toast header {
  display: flex;
  align-items: center;
  height: 55px;
  font-size: 15px;
}
.toast header span {
  margin: 0 auto 0 9px;
}
.toast-app {
  width: 18px;
  height: 18px;
}
.toast header button {
  margin-left: 38px;
  color: #555;
}
.toast header button svg {
  width: 12px;
  height: 12px;
}
.toast header button .more {
  width: 14px;
  height: 4px;
}
.toast-body {
  display: flex;
  gap: 22px;
  padding-top: 8px;
  font-size: 17px;
  line-height: 24px;
}
.toast-body svg {
  width: 70px;
  height: 48px;
  margin-top: 12px;
}
.toast-body strong {
  font-weight: 400;
}
.toast-body p {
  margin: 0;
  color: #5d5d5d;
}

/* Taskbar */
.taskbar {
  display: flex;
  justify-content: flex-end;
  align-items: center;
  height: 60px;
  padding-bottom: 1px;
  border-top: 1px solid #e2e2e2;
  background: #f2f2f2;
  color: #222;
  position: relative;
}
.task {
  display: grid;
  place-items: center;
  flex: none;
  width: 49px;
  height: 49px;
  margin: 0 3px;
  border-radius: 4px;
  position: relative;
}
.task svg {
  grid-area: 1 / 1;
  width: 30px;
  height: 30px;
}
.task.chrome-a svg,
.task.chrome-b svg,
.task.teams svg {
  width: 42px;
  height: 42px;
}
.letter {
  grid-area: 1 / 1;
  z-index: 1;
  color: #fff;
  font-size: 11px;
  line-height: 14px;
}
.amazon .letter {
  padding-bottom: 4px;
  color: #252f3e;
  font-size: 12px;
}
.teams .letter,
.word .letter {
  padding-right: 15px;
}
.badge {
  position: absolute;
  top: 6px;
  right: 3px;
  width: 16px;
  height: 16px;
  border-radius: 50%;
  background: #cc1237;
  color: #fff;
  font-size: 12px;
  line-height: 16px;
  text-align: center;
}
.task.start {
  margin-right: 58px;
}
.task.running::after {
  content: '';
  position: absolute;
  left: calc(50% - 4px);
  bottom: 0;
  width: 8px;
  height: 4px;
  border-radius: 2px;
  background: #888;
}
.task.active {
  background: #fbfbfb;
  box-shadow: 0 0 1px 1px #e4e4e4;
}
.task.active::after {
  left: calc(50% - 10px);
  width: 20px;
  background: #2f3350;
}
.tray {
  display: flex;
  align-items: center;
  gap: 10px;
  margin-left: 21px;
  padding-right: 24px;
  font-size: 15px;
}
.tray svg {
  width: 20px;
  height: 20px;
}
.tray .kbd {
  margin-left: 5px;
}
.lang {
  margin: 0 12px;
}
time {
  width: 82px;
  text-align: right;
  font-size: 14px;
  line-height: 20px;
  white-space: nowrap;
}
.count {
  width: 20px;
  height: 20px;
  margin-left: 4px;
  border-radius: 50%;
  background: #2f3350;
  color: #fff;
  font-size: 13px;
  line-height: 20px;
  text-align: center;
}
</style>
